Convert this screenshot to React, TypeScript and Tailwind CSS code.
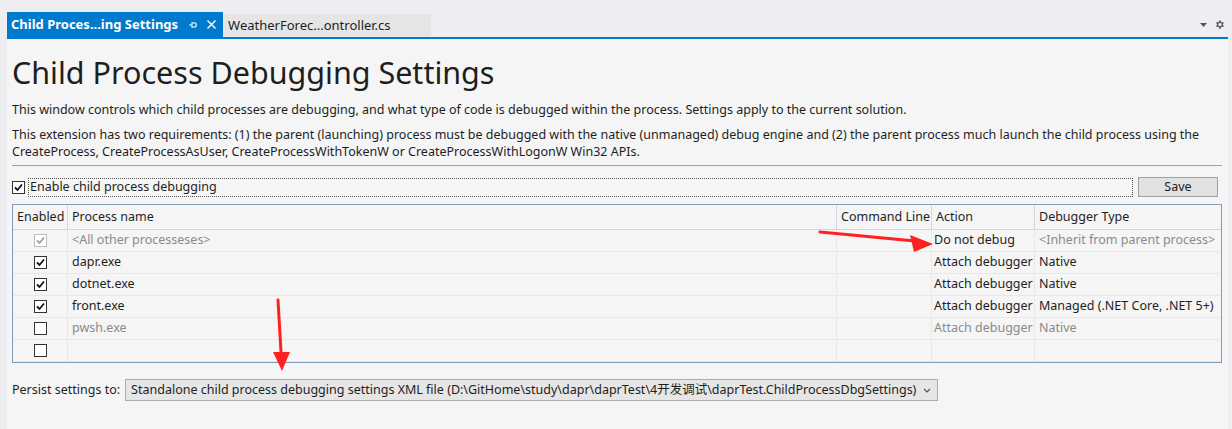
import React from 'react';

const font = { fontFamily: '"Noto Sans", "Noto Sans CJK SC", sans-serif' };

function Check({ checked, disabled }: { checked?: boolean; disabled?: boolean }) {
  return (
    <span
      className={
        'inline-flex h-[13px] w-[13px] items-center justify-center border bg-white ' +
        (disabled ? 'border-[#bcbcbc] bg-[#f0f0f0]' : 'border-[#333]')
      }
    >
      {checked && (
        <svg width="9" height="9" viewBox="0 0 9 9">
          <path d="M1 4.5 L3.5 7 L8 1.5" fill="none" stroke={disabled ? '#a0a0a0' : '#111'} strokeWidth="1.8" />
        </svg>
      )}
    </span>
  );
}

const rows = [
  { on: true, dis: true, name: '<All other processeses>', action: 'Do not debug', type: '<Inherit from parent process>', grayName: true, grayAction: false, grayType: true },
  { on: true, name: 'dapr.exe', action: 'Attach debugger', type: 'Native' },
  { on: true, name: 'dotnet.exe', action: 'Attach debugger', type: 'Native' },
  { on: true, name: 'front.exe', action: 'Attach debugger', type: 'Managed (.NET Core, .NET 5+)' },
  { on: false, name: 'pwsh.exe', action: 'Attach debugger', type: 'Native', grayName: true, grayAction: true, grayType: true },
  { on: false, name: '', action: '', type: '' },
];

export default function App() {
  return (
    <div className="relative h-[429px] w-[1232px] overflow-hidden bg-[#eeeef2] text-[12.5px] text-[#1e1e1e]" style={font}>
      {/* tab strip */}
      <div className="flex h-[37px] items-end pl-[7px] pr-[4px]">
        <div className="flex h-[25px] items-center bg-[#007acc] pl-[4px] pr-[6px] text-[13px] text-white">
          <span className="font-bold">Child Proces...ing Settings</span>
          <svg className="ml-[9px]" width="12" height="12" viewBox="0 0 12 12">
            <path d="M2 6 H5 M5 3 V9 M5 4 H9 V8 H5 M9 6 H10" fill="none" stroke="#fff" strokeWidth="1" />
          </svg>
          <svg className="ml-[7px]" width="11" height="11" viewBox="0 0 11 11">
            <path d="M1.5 1.5 L9.5 9.5 M9.5 1.5 L1.5 9.5" stroke="#fff" strokeWidth="1.4" />
          </svg>
        </div>
        <div className="flex h-[23px] w-[208px] items-center bg-[#e5e5e5] pl-[5px] text-[13px] text-[#1e1e1e]">
          WeatherForec...ontroller.cs
        </div>
        <div className="flex-1" />
        <div className="mb-[7px] flex items-center gap-[6px] pr-[3px]">
          <svg width="9" height="6" viewBox="0 0 9 6">
            <path d="M1 1 H8 L4.5 5 Z" fill="#555" />
          </svg>
          <svg width="11" height="11" viewBox="0 0 24 24">
            <path
              fill="#666"
              d="M19.4 13a7.5 7.5 0 0 0 0-2l2.1-1.6-2-3.5-2.5 1a7.6 7.6 0 0 0-1.7-1L15 3h-4l-.4 2.9a7.6 7.6 0 0 0-1.7 1l-2.5-1-2 3.5L6.5 11a7.5 7.5 0 0 0 0 2l-2.1 1.6 2 3.5 2.5-1c.5.4 1.1.7 1.7 1L11 21h4l.4-2.9c.6-.3 1.2-.6 1.7-1l2.5 1 2-3.5L19.4 13zM13 15.5a3.5 3.5 0 1 1 0-7 3.5 3.5 0 0 1 0 7z"
            />
          </svg>
        </div>
      </div>

      {/* content panel */}
      <div className="mx-[7px] mr-[4px] h-[392px] border-t-[2px] border-[#007acc] bg-[#f5f5f5] pl-[5px] pr-[6px]">
        <h1 className="mt-[13px] text-[30.5px] leading-[40px] text-[#1e1e1e]">Child Process Debugging Settings</h1>
        <p className="mt-[9px] leading-[17px]">
          This window controls which child processes are debugging, and what type of code is debugged within the process. Settings apply to the current solution.
        </p>
        <p className="mt-[8px] leading-[17px]">
          This extension has two requirements: (1) the parent (launching) process must be debugged with the native (unmanaged) debug engine and (2) the parent process much launch the child process using the CreateProcess, CreateProcessAsUser, CreateProcessWithTokenW or CreateProcessWithLogonW Win32 APIs.
        </p>
        <div className="mt-[5px] h-px bg-[#a0a0a0]" />

        <div className="mt-[11px] flex items-center">
          <Check checked />
          <div className="ml-[3px] flex h-[19px] flex-1 items-center border border-dotted border-[#555] px-[1px]">
            Enable child process debugging
          </div>
          <button className="ml-[5px] mr-[4px] h-[20px] w-[80px] border border-[#a0a0a0] bg-[#e1e1e1] text-[12.5px]">Save</button>
        </div>

        <div className="mt-[7px] border border-[#7f9db9]">
          <div className="grid grid-cols-[55px_769px_95px_103px_1fr] text-[#1e1e1e]">
            {['Enabled', 'Process name', 'Command Line', 'Action', 'Debugger Type'].map((h, i) => (
              <div
                key={h}
                className={'flex h-[25px] items-center whitespace-nowrap border-b border-[#d6d6e2] px-[4px] ' + (i < 4 ? 'border-r' : '')}
              >
                {h}
              </div>
            ))}
            {rows.map((r, idx) => (
              <React.Fragment key={idx}>
                <div className="flex h-[22px] items-center justify-center border-b border-r border-[#e8e8ec]">
                  <Check checked={r.on} disabled={r.dis} />
                </div>
                <div className={'flex h-[22px] items-center border-b border-r border-[#e8e8ec] px-[4px] ' + (r.grayName ? 'text-[#8a8a8a]' : '')}>
                  {r.name}
                </div>
                <div className="h-[22px] border-b border-r border-[#e8e8ec]" />
                <div className={'flex h-[22px] items-center whitespace-nowrap border-b border-r border-[#e8e8ec] px-[2px] ' + (r.grayAction ? 'text-[#8a8a8a]' : '')}>
                  {r.action}
                </div>
                <div className={'flex h-[22px] items-center whitespace-nowrap border-b border-[#e8e8ec] px-[4px] ' + (r.grayType ? 'text-[#8a8a8a]' : '')}>
                  {r.type}
                </div>
              </React.Fragment>
            ))}
          </div>
        </div>

        <div className="mt-[16px] flex items-center">
          <span>Persist settings to:</span>
          <div className="ml-[5px] flex h-[22px] w-[813px] items-center border border-[#acacac] bg-[#e6e6e6] pl-[5px] pr-[6px]">
            <span className="flex-1 whitespace-nowrap">
              Standalone child process debugging settings XML file (D:\GitHome\study\dapr\daprTest\4开发调试\daprTest.ChildProcessDbgSettings)
            </span>
            <svg width="8" height="5" viewBox="0 0 8 5">
              <path d="M1 1 L4 4 L7 1" fill="none" stroke="#555" strokeWidth="1.2" />
            </svg>
          </div>
        </div>
      </div>

      {/* red annotation arrows */}
      <svg className="pointer-events-none absolute left-0 top-0" width="1232" height="429">
        <path d="M820 232 L915 241" stroke="#ff2020" strokeWidth="3" strokeLinecap="round" />
        <path d="M933 244 L910 235 L914 252 Z" fill="#ff2020" />
        <path d="M278 300 L281 352" stroke="#ff2020" strokeWidth="3" strokeLinecap="round" />
        <path d="M282 371 L273 352 L290 352 Z" fill="#ff2020" />
      </svg>
    </div>
  );
}
